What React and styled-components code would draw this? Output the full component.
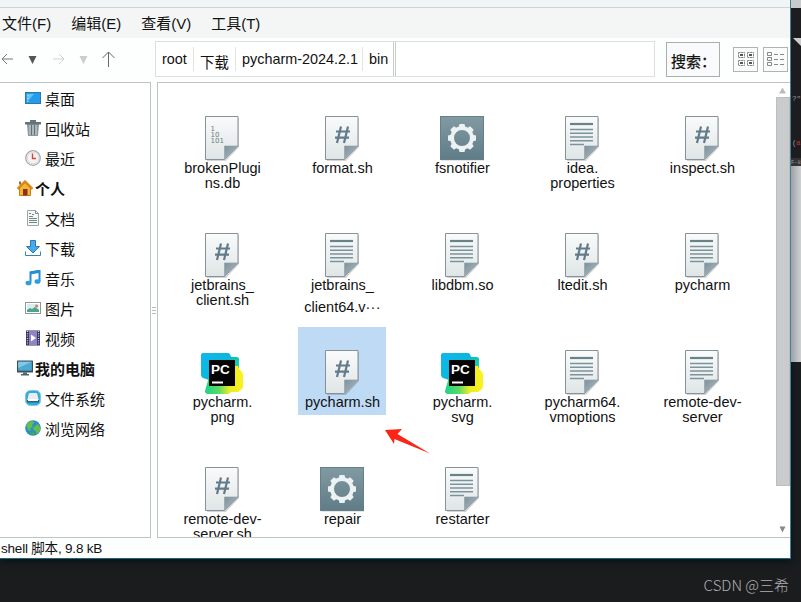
import React from "react";
import styled, { createGlobalStyle } from "styled-components";

const places = [
	{ name: "桌面", icon: "desktop" },
	{ name: "回收站", icon: "trash" },
	{ name: "最近", icon: "recent" },
	{ name: "个人", icon: "home", group: true },
	{ name: "文档", icon: "document" },
	{ name: "下载", icon: "download" },
	{ name: "音乐", icon: "music" },
	{ name: "图片", icon: "picture" },
	{ name: "视频", icon: "video" },
	{ name: "我的电脑", icon: "computer", group: true },
	{ name: "文件系统", icon: "disk" },
	{ name: "浏览网络", icon: "network" },
];

const files = [
	{ lines: ["brokenPlugi", "ns.db"], type: "binary" },
	{ lines: ["format.sh"], type: "script" },
	{ lines: ["fsnotifier"], type: "program" },
	{ lines: ["idea.", "properties"], type: "text" },
	{ lines: ["inspect.sh"], type: "script" },
	{ lines: ["jetbrains_", "client.sh"], type: "script" },
	{ lines: ["jetbrains_", "client64.v"], type: "text", cut: true },
	{ lines: ["libdbm.so"], type: "text" },
	{ lines: ["ltedit.sh"], type: "script" },
	{ lines: ["pycharm"], type: "text" },
	{ lines: ["pycharm.", "png"], type: "pycharm" },
	{ lines: ["pycharm.sh"], type: "script", selected: true },
	{ lines: ["pycharm.", "svg"], type: "pycharm" },
	{ lines: ["pycharm64.", "vmoptions"], type: "text" },
	{ lines: ["remote-dev-", "server"], type: "text" },
	{ lines: ["remote-dev-", "server.sh"], type: "script" },
	{ lines: ["repair"], type: "program" },
	{ lines: ["restarter"], type: "text" },
];

const placeIcons = {
	desktop: (
		<>
			<rect x="0.5" y="2.5" width="15" height="11" fill="#259bea" stroke="#2879ad" />
			<path d="M2 12V4h7z" fill="#65c5fa" />
			<path d="M3 5v1M3 8v1M3 11v1" stroke="#c4edff" />
		</>
	),
	trash: (
		<>
			<path d="M2 4h12l-1 12H3z" fill="#8b999e" />
			<path d="M5 5v10M8 5v10M11 5v10" stroke="#c4cdd1" strokeWidth="1.2" />
			<path d="M6.5 5v10M9.5 5v10" stroke="#647278" />
			<path d="M0 2h16v2.5H0zM5 0h6v2H5z" fill="#63747b" />
		</>
	),
	recent: (
		<>
			<circle cx="8" cy="8" r="7.3" fill="#f4f3f2" stroke="#aaa" strokeWidth="1.3" />
			<circle cx="8" cy="8" r="5.7" fill="none" stroke="#dedddd" />
			<path d="M7.5 3.5v5H11" fill="none" stroke="#cf4540" strokeWidth="1.4" />
		</>
	),
	home: (
		<>
			<path d="M2.5 8v7.5h11V8L8 2.5z" fill="#f4b437" stroke="#c28019" />
			<path d="M0.5 9L8 1.5 15.5 9" fill="none" stroke="#d78a17" strokeWidth="2.4" />
			<path d="M3 1.5v3" stroke="#a66618" strokeWidth="2" />
			<path d="M6 9h4.5v6.5H6z" fill="#8e301b" />
		</>
	),
	document: (
		<>
			<path d="M2.5 0.5h8l3 3v12h-11z" fill="#f5f8f7" stroke="#9ba7a4" />
			<path d="M10.5 0.5v3h3" fill="none" stroke="#81908c" />
			<path d="M4 3.5h2M4 6.5h4M4 8.5h8M4 10.5h8M4 12.5h8M7 4.5h2" stroke="#71877f" />
		</>
	),
	download: (
		<>
			<path d="M5.5 0.5h5v6h4L8 13 1.5 6.5h4z" fill="#4aaae9" stroke="#247cb8" />
			<path d="M0.5 11.5v4h15v-4" fill="none" stroke="#3983ae" />
		</>
	),
	music: (
		<>
			<path d="M5.5 12V2.5L14.5 1v10" fill="none" stroke="#258ed4" strokeWidth="2" />
			<path d="M5 3l10-1.8" stroke="#258ed4" strokeWidth="3" />
			<ellipse cx="3.5" cy="13" rx="3" ry="2.3" fill="#2b9de0" />
			<ellipse cx="12.5" cy="11.5" rx="3" ry="2.3" fill="#2b9de0" />
		</>
	),
	picture: (
		<>
			<rect x="0.5" y="2.5" width="15" height="11" fill="#fff" stroke="#8d9998" />
			<path d="M2 4h12v8H2z" fill="#d6edf2" />
			<path d="M2 10l3-2 2 1 3-2 4 3v2H2z" fill="#4aa58b" />
			<circle cx="11.5" cy="6" r="1.5" fill="#e4764f" />
		</>
	),
	video: (
		<>
			<path d="M1 0.5h14v15H1z" fill="#332f5c" />
			<path d="M4 1h8v14H4z" fill="#8f83c4" />
			<path d="M2.5 1v14M13.5 1v14" stroke="#d9d7e8" strokeWidth="1.4" strokeDasharray="1 1.3" />
			<path d="M6 4.5v7l5-3.5z" fill="#fff" />
		</>
	),
	computer: (
		<>
			<rect x="0" y="0.5" width="16" height="12" rx="0.5" fill="#39505a" />
			<path d="M1.2 1.7h13.6v9H1.2z" fill="#4ca9d5" />
			<path d="M1.2 8V1.7h13.6z" fill="#82c9e5" />
			<path d="M6 12.5h4V14h2v1.5H4V14h2z" fill="#55646a" />
		</>
	),
	disk: (
		<>
			<rect x="0.5" y="0.5" width="15" height="15" rx="5" fill="#35a9dc" stroke="#79c8e9" />
			<path d="M5 3h6q1 0 1.300 1L14 11H2L3.700 4Q4 3 5 3z" fill="#e7eef2" />
			<path d="M2 10h12v2.500H2z" fill="#28627c" />
			<path d="M3 9h10v2H3z" fill="#fff" />
		</>
	),
	network: (
		<>
			<circle cx="8" cy="8" r="7.8" fill="#278fca" />
			<path d="M1 5l3-3.500 4-.5 1 2-2 2 1 2-3 1 1 2-2 1zM10 6l3-2 2.500 4-1 4-3 2-1-3-3-2z" fill="#66bc4d" />
			<path d="M5 13l3-2 2 3-2 1.500z" fill="#48a84a" />
		</>
	),
};

const PlaceIcon = ({ name }) => (
	<svg width="16" height="16" viewBox="0 0 16 16">{placeIcons[name]}</svg>
);

const PageIcon = ({ type }) => (
	<svg width="44" height="45" viewBox="0 0 44 45">
		<defs>
			<linearGradient id="paper" x1="0" y1="0" x2="0" y2="1">
				<stop offset="0" stopColor="#fafbfb" />
				<stop offset="1" stopColor="#dfe5e6" />
			</linearGradient>
			<linearGradient id="fold" x1="0" y1="0" x2="1" y2="1">
				<stop offset="0" stopColor="#7d9099" />
				<stop offset="1" stopColor="#b4c2c8" />
			</linearGradient>
		</defs>
		<path d="M7 2h32v29L26 45H7z" fill="#000" opacity="0.17" />
		<path d="M5.500 0.500h32.500v29.500L24.500 43.500h-19z" fill="url(#paper)" stroke="#859298" />
		<path d="M24.500 43.500V30H38.500z" fill="url(#fold)" stroke="#94a3aa" strokeWidth="0.7" />
		{type === "text" && (
			<>
				<path d="M10 8h23" stroke="#69838a" strokeWidth="2.2" />
				<path d="M10 13.500h23M10 17.300h23M10 21h23M10 24.700h23M10 28.400h14" stroke="#7d939b" strokeWidth="1.5" />
			</>
		)}
		{type === "script" && (
			<path d="M21 10.500l-4 16.500M28 10.500l-4 16.500M16 15.500H30M15 21.700H29" fill="none" stroke="#617b8b" strokeWidth="2.2" />
		)}
		{type === "binary" && (
			<Bits>
				<tspan x="10.5" y="15">1</tspan>
				<tspan x="10.5" y="21">10</tspan>
				<tspan x="10.5" y="27">101</tspan>
			</Bits>
		)}
	</svg>
);

const teeth = [0, 45, 90, 135, 180, 225, 270, 315];

const GearIcon = () => (
	<svg width="44" height="45" viewBox="0 0 44 45">
		<defs>
			<linearGradient id="steel" x1="0" y1="0" x2="0" y2="1">
				<stop offset="0" stopColor="#829aa2" />
				<stop offset="1" stopColor="#5f7c87" />
			</linearGradient>
		</defs>
		<path d="M1 1h44v44H1z" fill="#000" opacity="0.1" />
		<rect x="0.5" y="0.5" width="43" height="43" fill="url(#steel)" stroke="#63808b" />
		<circle cx="22" cy="22" r="9.9" fill="none" stroke="#ecf1f3" strokeWidth="3.8" />
		{teeth.map((angle) => (
			<path key={angle} d="M19.500 8h5l1 4h-7z" fill="#ecf1f3" transform={`rotate(${angle} 22 22)`} />
		))}
	</svg>
);

const PyCharmIcon = () => (
	<svg width="44" height="45" viewBox="0 0 44 45">
		<defs>
			<linearGradient id="pcBlue" x1="0" y1="0" x2="1" y2="0.6">
				<stop offset="0" stopColor="#14b6ed" />
				<stop offset="0.6" stopColor="#08b8dc" />
				<stop offset="1" stopColor="#21d789" />
			</linearGradient>
			<linearGradient id="pcGreen" x1="0" y1="0" x2="1" y2="0">
				<stop offset="0" stopColor="#21d285" />
				<stop offset="0.35" stopColor="#51db68" />
				<stop offset="0.65" stopColor="#ecec25" />
				<stop offset="1" stopColor="#fcf21c" />
			</linearGradient>
		</defs>
		<path d="M3 3h25q2 0 3 4h6q2 0 2 2v14H9v7L3 28q-2-1-2-3V5q0-2 2-2z" fill="url(#pcBlue)" />
		<path d="M9 27l-4 14q0 3 3 3h20q2 0 3-2h7l4-3q1-1 1-3V25q0-3-4-6l-1-3H31v11z" fill="url(#pcGreen)" />
		<path d="M9 10h26v26H9z" fill="#050505" />
		<PcText x="11" y="24">PC</PcText>
		<path d="M12 31.500h11v2H12z" fill="#fff" />
	</svg>
);

const FileIcon = ({ type }) => {
	if (type === "program") return <GearIcon />;
	if (type === "pycharm") return <PyCharmIcon />;
	return <PageIcon type={type} />;
};

const App = () => {
	return (
		<Screen>
			<GlobalStyle />
			<Window>
				<TitleStrip />
				<MenuBar>
					<span>文件(F)</span>
					<span>编辑(E)</span>
					<span>查看(V)</span>
					<span>工具(T)</span>
				</MenuBar>
				<Toolbar>
					<Navigation>
						<svg width="120" height="24" viewBox="0 0 120 24" fill="none">
							<path d="M2 12h11M7 7l-5 5 5 5" stroke="#777" />
							<path d="M28.500 9h8l-4 8z" fill="#555" />
							<path d="M53 12h11M59 7l5 5-5 5" stroke="#d1d1d1" />
							<path d="M79.500 9h8l-4 8z" fill="#ccc" />
							<path d="M108.500 20V5M102.500 11l6-6 6 6" stroke="#666" />
						</svg>
					</Navigation>
					<PathBar>
						<Crumb $width={38}>root</Crumb>
						<Crumb $width={42} $cjk>下载</Crumb>
						<Crumb $width={127}>pycharm-2024.2.1</Crumb>
						<Crumb $width={32} $last>bin</Crumb>
						<PathEntry />
					</PathBar>
					<SearchButton>搜索：</SearchButton>
					<ViewButton>
						<svg width="16" height="14" viewBox="0 0 16 14" fill="none" stroke="#888">
							<path d="M.5.5h6v5h-6zM9.500.5h6v5h-6zM.5 8.500h6v5h-6zM9.500 8.500h6v5h-6z" strokeDasharray="2 0.5" />
							<path d="M2 3h3M11 3h3M2 11h3M11 11h3" stroke="#555" strokeWidth="2" />
						</svg>
					</ViewButton>
					<ViewButton>
						<svg width="18" height="14" viewBox="0 0 18 14" fill="none" stroke="#888">
							<path d="M.5.5h4v3h-4zM.5 5.500h4v3h-4zM.5 10.500h4v3h-4z" />
							<path d="M7 2.500h4M13 2.500h4M7 7.500h4M13 7.500h4M7 12.500h4M13 12.500h4" />
						</svg>
					</ViewButton>
				</Toolbar>
				<Body>
					<Sidebar>
						{places.map((place) => (
							<Place key={place.name} $group={place.group}>
								<PlaceIcon name={place.icon} />
								<span>{place.name}</span>
							</Place>
						))}
					</Sidebar>
					<Splitter>
						<Grip />
					</Splitter>
					<FileArea>
						<FileGrid>
							{files.map((file) => (
								<FileTile key={file.lines.join("")} $selected={file.selected}>
									<FileIcon type={file.type} />
									<FileName>
										{file.lines.map((line, index) => (
											<NameLine key={line} $low={file.cut && index === 1}>
												{line}
												{file.cut && index === 1 && <Ellipsis>···</Ellipsis>}
											</NameLine>
										))}
									</FileName>
								</FileTile>
							))}
						</FileGrid>
						<Scrollbar>
							<ScrollArrow viewBox="0 0 13 13">
								<path d="M6.500 4l3.500 6H3z" fill="#bbb" />
							</ScrollArrow>
							<Thumb />
							<ScrollArrow viewBox="0 0 13 13">
								<path d="M6.500 10L3.500 4h6z" fill="#888" />
							</ScrollArrow>
						</Scrollbar>
					</FileArea>
				</Body>
				<StatusBar>shell 脚本, 9.8 kB</StatusBar>
			</Window>
			<Backdrop>
				<BackTitle />
				<BackTerminal>
					<svg width="10" height="158" viewBox="0 0 10 158">
						<path d="M2 30h8v8z" fill="#ccc" />
						<BackText x="1" y="93">?"</BackText>
						<BackText x="1" y="137">(</BackText>
						<BackText x="5" y="137" $red>a</BackText>
						<path d="M0 150h10v8H0z" fill="#333" />
						<BackText x="0" y="156" $small>F-8</BackText>
					</svg>
				</BackTerminal>
				<BackPane />
			</Backdrop>
			<Pointer width="48" height="28" viewBox="0 0 48 28">
				<path d="M2 4l17-1-4.500 5L47 27.500 11.500 13 11 18z" fill="#fb2415" />
			</Pointer>
			<Watermark>CSDN @三希</Watermark>
		</Screen>
	);
};

const GlobalStyle = createGlobalStyle`
	body {
		margin: 0;
		background: #1b1c1d;
		overflow: hidden;
	}

	* {
		box-sizing: border-box;
	}

	svg {
		display: block;
		flex: none;
	}
`;

const Screen = styled.div`
	position: relative;
	display: flex;
	width: 801px;
	height: 602px;
	overflow: hidden;
	background: #1b1c1d;
	font-family: "Liberation Sans", "Noto Sans CJK SC", sans-serif;
	font-size: 15px;
	color: #111;
`;

const Window = styled.div`
	display: flex;
	flex-direction: column;
	flex: none;
	width: 791px;
	height: 559px;
	background: #fdfefe;
	border-right: 1px solid #478197;
	border-bottom: 1px solid #23647a;
	box-shadow: 0 2px 7px #001519;

	> * {
		flex: none;
	}
`;

const TitleStrip = styled.div`
	height: 8px;
	background: #f1f5f8;
	border-bottom: 1px solid #cfd4d6;
`;

const MenuBar = styled.div`
	display: flex;
	gap: 20px;
	height: 30px;
	padding-left: 2px;
	line-height: 32px;
	background: #f4f6f6;
	white-space: nowrap;
`;

const Toolbar = styled.div`
	display: flex;
	align-items: center;
	height: 44px;
	padding-bottom: 2px;

	> * {
		flex: none;
	}
`;

const Navigation = styled.div`
	width: 155px;
`;

const PathBar = styled.div`
	display: flex;
	align-items: center;
	width: 500px;
	height: 36px;
	margin-right: 11px;
	border: 1px solid #dddfdf;
	background: #fff;
`;

const Crumb = styled.div`
	display: flex;
	align-items: center;
	flex: none;
	width: ${({ $width }) => $width}px;
	height: 24px;
	padding-left: 6px;
	padding-top: ${({ $cjk }) => ($cjk ? 4 : 0)}px;
	border-right: ${({ $last }) => ($last ? 0 : "1px solid #e4e4e4")};
	font-size: 14.4px;
	white-space: nowrap;
`;

const PathEntry = styled.div`
	flex: 1;
	height: 34px;
	margin-left: -2px;
	border-left: 3px double #c8cbcb;
`;

const SearchButton = styled.div`
	display: flex;
	align-items: center;
	width: 54px;
	height: 35px;
	margin-right: 13px;
	padding: 3px 0 0 4px;
	border: 1px solid #aaaeae;
	background: #f8fafb;
	-webkit-text-stroke: 0.25px #111;
	white-space: nowrap;
`;

const ViewButton = styled.div`
	display: flex;
	align-items: center;
	justify-content: center;
	width: 25px;
	height: 25px;
	margin-right: 5px;
	border: 1px solid #b0b3b3;
	background: #fafbfb;
`;

const Body = styled.div`
	display: flex;
	height: 456px;
`;

const Sidebar = styled.div`
	width: 151px;
	border: solid #bfc2c3;
	border-width: 1px 1px 1px 0;
	background: #fff;
`;

const Place = styled.div`
	display: flex;
	align-items: center;
	gap: ${({ $group }) => ($group ? 2 : 4)}px;
	height: 30px;
	padding-left: ${({ $group }) => ($group ? 17 : 25)}px;
	font-weight: ${({ $group }) => ($group ? 700 : 400)};

	svg {
		margin-bottom: 1px;
	}
`;

const Splitter = styled.div`
	display: flex;
	align-items: center;
	justify-content: center;
	width: 6px;
`;

const Grip = styled.div`
	width: 4px;
	height: 7px;
	background: repeating-linear-gradient(#bbb 0 1px, transparent 1px 3px);
`;

const FileArea = styled.div`
	display: flex;
	width: 633px;
	overflow: hidden;
	border: solid #bfc2c3;
	border-width: 1px 0 1px 1px;
	background: #fff;
`;

const FileGrid = styled.div`
	display: grid;
	grid-template-columns: repeat(5, 88px);
	grid-auto-rows: 88px;
	gap: 29px 32px;
	width: 618px;
	padding: 10px 0 0 20px;
`;

const FileTile = styled.div`
	display: flex;
	flex-direction: column;
	align-items: center;
	padding-top: 23px;
	background: ${({ $selected }) => ($selected ? "#bfdaf5" : "transparent")};
`;

const FileName = styled.div`
	padding-left: 1px;
	font-size: 14.5px;
	line-height: 15px;
	text-align: center;
	white-space: nowrap;
`;

const NameLine = styled.div`
	height: 15px;
	margin-top: ${({ $low }) => ($low ? 7 : 0)}px;
`;

const Ellipsis = styled.span`
	letter-spacing: 0.2px;
`;

const Scrollbar = styled.div`
	display: flex;
	flex-direction: column;
	width: 14px;
`;

const ScrollArrow = styled.svg`
	width: 13px;
	height: 14px;
`;

const Thumb = styled.div`
	flex: none;
	height: 389px;
	margin-bottom: 36px;
	background: #cacbcc;
	border: 1px solid #bdbebf;
`;

const StatusBar = styled.div`
	height: 20px;
	padding-left: 1px;
	font-size: 13.5px;
	line-height: 21px;
	letter-spacing: -0.2px;
`;

const Backdrop = styled.div`
	width: 10px;
`;

const BackTitle = styled.div`
	height: 8px;
	background: #c9cacb;
`;

const BackTerminal = styled.div`
	height: 158px;
	background: #1d1d1f;
`;

const BackPane = styled.div`
	height: 196px;
	background: linear-gradient(90deg, #9da2a5, #cfd0d1);
`;

const BackText = styled.text`
	font: ${({ $small }) => ($small ? 5.5 : 7.5)}px "Liberation Mono", monospace;
	fill: ${({ $red }) => ($red ? "#b43c35" : "#999")};
`;

const Bits = styled.text`
	font: 7px "DejaVu Sans", sans-serif;
	fill: #6d7b81;
`;

const PcText = styled.text`
	font: bold 13.5px "Liberation Sans", sans-serif;
	fill: #fff;
`;

const Pointer = styled.svg`
	position: absolute;
	left: 383px;
	top: 426px;
`;

const Watermark = styled.div`
	position: absolute;
	right: 12px;
	bottom: 6px;
	font-family: "Noto Sans CJK SC", sans-serif;
	font-size: 15px;
	font-weight: 300;
	line-height: 22px;
	color: #aeb0b1;
	white-space: nowrap;
`;

export default App;
